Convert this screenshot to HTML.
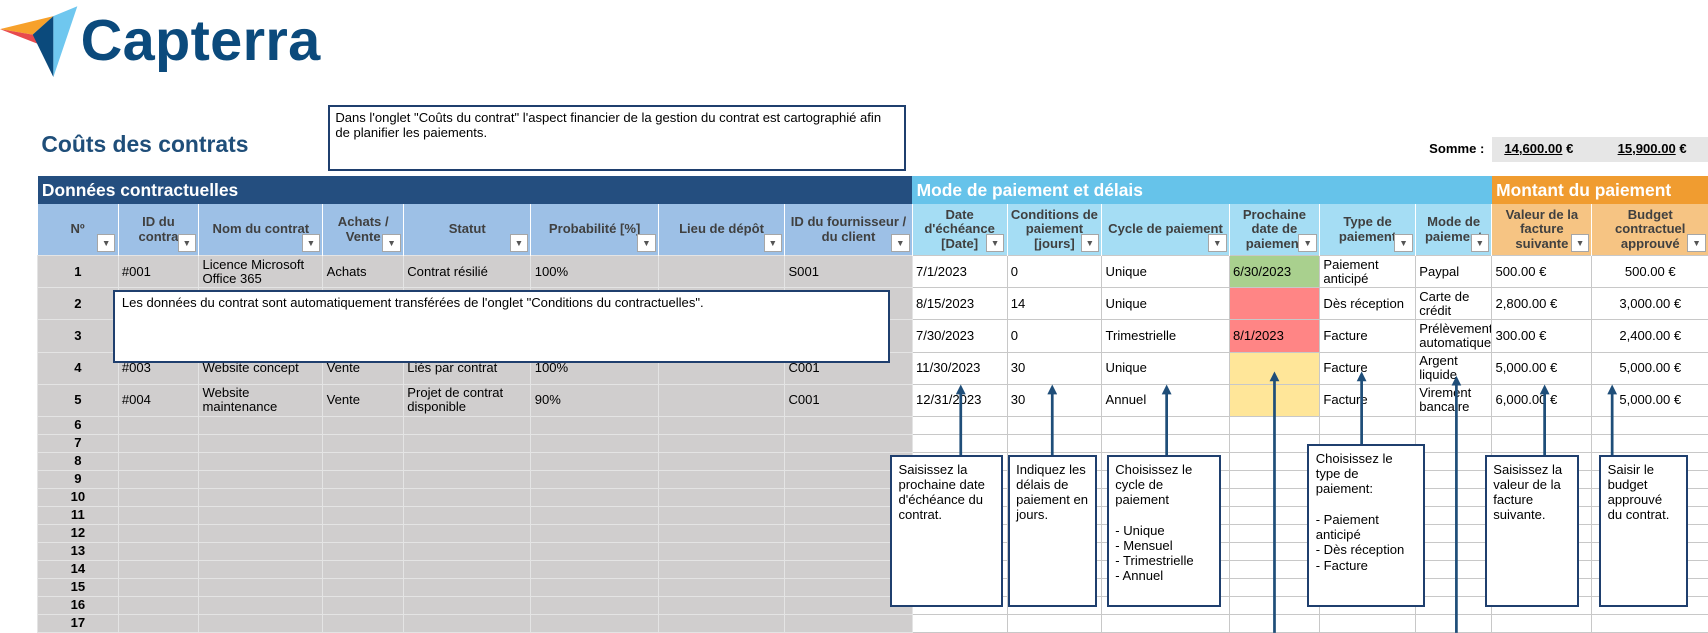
<!DOCTYPE html>
<html><head><meta charset="utf-8"><style>
*{margin:0;padding:0;box-sizing:border-box}
html,body{width:1708px;height:633px;overflow:hidden;background:#fff}
#w{zoom:1.0893;position:relative;width:1568px;height:581px;font-family:"Liberation Sans",Arial,sans-serif;color:#000}
.abs{position:absolute}
table{position:absolute;left:34px;top:162px;border-collapse:collapse;table-layout:fixed;width:1534px}
td,th{font-size:12px;line-height:13px;overflow:hidden;white-space:nowrap;padding:0 3px;vertical-align:middle;text-align:left;font-weight:normal}
.sec td{height:25px;color:#fff;font-weight:bold;font-size:16px;padding-left:4px}
.hd th{height:48px;font-weight:bold;color:#404040;text-align:center;white-space:normal;position:relative;border-right:1px solid #fff;padding:0 2px}
.hd th i{position:absolute;right:2px;bottom:3px;width:17px;height:17px;background:#fff;border:1px solid #a6a6a6;font-style:normal;font-size:8px;line-height:16px;color:#555;text-align:center}
.l{background:#d0cece;border:1px solid #e4e4e4}
.r{background:#fff;border:1px solid #c8c8c8}
.n{font-weight:bold;text-align:center}
tr.d td{height:29.4px;white-space:normal}
tr.e td{height:16.58px}
.box{position:absolute;border:2px solid #1f3f6e;background:#fff;font-size:12px;line-height:14px;padding:4px 6px}
</style></head><body><div id="w">
<svg class="abs" style="left:0;top:3px" width="72" height="68" viewBox="0 0 72 68">
<polygon points="0,24 49,12 30,29" fill="#f7a12b"/>
<polygon points="0,24 30,29 36,38" fill="#e84a4d"/>
<polygon points="30,29 49,12 49,68" fill="#0b4a7c"/>
<polygon points="49,12 71,3 49,68" fill="#6fc7ef"/>
</svg>
<div class="abs" style="left:74px;top:7px;font-size:53px;font-weight:bold;color:#0b4a7c;letter-spacing:0.3px">Capterra</div>
<div class="abs" style="left:38px;top:120px;font-size:21px;font-weight:bold;color:#1f4e79">Coûts des contrats</div>
<div class="box" style="left:301px;top:96px;width:531px;height:61px;padding:3px 5px">Dans l'onglet "Coûts du contrat" l'aspect financier de la gestion du contrat est cartographié afin de planifier les paiements.</div>
<div class="abs" style="left:1370px;top:126px;width:198px;height:23px;background:#e6e6e6"></div>
<div class="abs" style="left:1312px;top:129px;font-size:12px;font-weight:bold">Somme :</div>
<div class="abs" style="left:1381px;top:129px;font-size:12px;font-weight:bold"><u>14,600.00</u> €</div>
<div class="abs" style="left:1485px;top:129px;font-size:12px;font-weight:bold"><u>15,900.00</u> €</div>
<table>
<colgroup><col style="width:74px"><col style="width:74px"><col style="width:114px"><col style="width:74px"><col style="width:117px"><col style="width:117px"><col style="width:116px"><col style="width:117px"><col style="width:87px"><col style="width:87px"><col style="width:117px"><col style="width:83px"><col style="width:88px"><col style="width:70px"><col style="width:92px"><col style="width:107px"></colgroup>
<tr class="sec"><td colspan="8" style="background:#244e7f">Données contractuelles</td><td colspan="6" style="background:#66c3ea">Mode de paiement et délais</td><td colspan="2" style="background:#f09c30">Montant du paiement</td></tr>
<tr class="hd">
<th style="background:#9dc0e6">Nº<i>▼</i></th><th style="background:#9dc0e6">ID du contra<i>▼</i></th><th style="background:#9dc0e6">Nom du contrat<i>▼</i></th><th style="background:#9dc0e6">Achats / Vente<i>▼</i></th><th style="background:#9dc0e6">Statut<i>▼</i></th><th style="background:#9dc0e6">Probabilité [%]<i>▼</i></th><th style="background:#9dc0e6">Lieu de dépôt<i>▼</i></th><th style="background:#9dc0e6">ID du fournisseur / du client<i>▼</i></th>
<th style="background:#a5ddf4">Date d'échéance [Date]<i>▼</i></th><th style="background:#a5ddf4">Conditions de paiement [jours]<i>▼</i></th><th style="background:#a5ddf4">Cycle de paiement<i>▼</i></th><th style="background:#a5ddf4">Prochaine date de paiement<i>▼</i></th><th style="background:#a5ddf4">Type de paiement<i>▼</i></th><th style="background:#a5ddf4">Mode de paiement<i>▼</i></th>
<th style="background:#f6c483">Valeur de la facture suivante<i>▼</i></th><th style="background:#f6c483">Budget contractuel approuvé<i>▼</i></th></tr>
<tr class="d"><td class="l n">1</td><td class="l">#001</td><td class="l">Licence Microsoft Office 365</td><td class="l">Achats</td><td class="l">Contrat résilié</td><td class="l">100%</td><td class="l"></td><td class="l">S001</td><td class="r">7/1/2023</td><td class="r">0</td><td class="r">Unique</td><td class="r" style="background:#a9d08e">6/30/2023</td><td class="r">Paiement anticipé</td><td class="r">Paypal</td><td class="r">500.00 €</td><td class="r" style="text-align:center">500.00 €</td></tr>
<tr class="d"><td class="l n">2</td><td class="l"></td><td class="l"></td><td class="l"></td><td class="l"></td><td class="l"></td><td class="l"></td><td class="l"></td><td class="r">8/15/2023</td><td class="r">14</td><td class="r">Unique</td><td class="r" style="background:#ff8585"></td><td class="r">Dès réception</td><td class="r">Carte de crédit</td><td class="r">2,800.00 €</td><td class="r" style="text-align:center">3,000.00 €</td></tr>
<tr class="d"><td class="l n">3</td><td class="l"></td><td class="l"></td><td class="l"></td><td class="l"></td><td class="l"></td><td class="l"></td><td class="l"></td><td class="r">7/30/2023</td><td class="r">0</td><td class="r">Trimestrielle</td><td class="r" style="background:#ff8585">8/1/2023</td><td class="r">Facture</td><td class="r">Prélèvement automatique</td><td class="r">300.00 €</td><td class="r" style="text-align:center">2,400.00 €</td></tr>
<tr class="d"><td class="l n">4</td><td class="l">#003</td><td class="l">Website concept</td><td class="l">Vente</td><td class="l">Liés par contrat</td><td class="l">100%</td><td class="l"></td><td class="l">C001</td><td class="r">11/30/2023</td><td class="r">30</td><td class="r">Unique</td><td class="r" style="background:#ffe699"></td><td class="r">Facture</td><td class="r">Argent liquide</td><td class="r">5,000.00 €</td><td class="r" style="text-align:center">5,000.00 €</td></tr>
<tr class="d"><td class="l n">5</td><td class="l">#004</td><td class="l">Website maintenance</td><td class="l">Vente</td><td class="l">Projet de contrat disponible</td><td class="l">90%</td><td class="l"></td><td class="l">C001</td><td class="r">12/31/2023</td><td class="r">30</td><td class="r">Annuel</td><td class="r" style="background:#ffe699"></td><td class="r">Facture</td><td class="r">Virement bancaire</td><td class="r">6,000.00 €</td><td class="r" style="text-align:center">5,000.00 €</td></tr>
<tr class="e"><td class="l n">6</td><td class="l"></td><td class="l"></td><td class="l"></td><td class="l"></td><td class="l"></td><td class="l"></td><td class="l"></td><td class="r"></td><td class="r"></td><td class="r"></td><td class="r"></td><td class="r"></td><td class="r"></td><td class="r"></td><td class="r"></td></tr>
<tr class="e"><td class="l n">7</td><td class="l"></td><td class="l"></td><td class="l"></td><td class="l"></td><td class="l"></td><td class="l"></td><td class="l"></td><td class="r"></td><td class="r"></td><td class="r"></td><td class="r"></td><td class="r"></td><td class="r"></td><td class="r"></td><td class="r"></td></tr>
<tr class="e"><td class="l n">8</td><td class="l"></td><td class="l"></td><td class="l"></td><td class="l"></td><td class="l"></td><td class="l"></td><td class="l"></td><td class="r"></td><td class="r"></td><td class="r"></td><td class="r"></td><td class="r"></td><td class="r"></td><td class="r"></td><td class="r"></td></tr>
<tr class="e"><td class="l n">9</td><td class="l"></td><td class="l"></td><td class="l"></td><td class="l"></td><td class="l"></td><td class="l"></td><td class="l"></td><td class="r"></td><td class="r"></td><td class="r"></td><td class="r"></td><td class="r"></td><td class="r"></td><td class="r"></td><td class="r"></td></tr>
<tr class="e"><td class="l n">10</td><td class="l"></td><td class="l"></td><td class="l"></td><td class="l"></td><td class="l"></td><td class="l"></td><td class="l"></td><td class="r"></td><td class="r"></td><td class="r"></td><td class="r"></td><td class="r"></td><td class="r"></td><td class="r"></td><td class="r"></td></tr>
<tr class="e"><td class="l n">11</td><td class="l"></td><td class="l"></td><td class="l"></td><td class="l"></td><td class="l"></td><td class="l"></td><td class="l"></td><td class="r"></td><td class="r"></td><td class="r"></td><td class="r"></td><td class="r"></td><td class="r"></td><td class="r"></td><td class="r"></td></tr>
<tr class="e"><td class="l n">12</td><td class="l"></td><td class="l"></td><td class="l"></td><td class="l"></td><td class="l"></td><td class="l"></td><td class="l"></td><td class="r"></td><td class="r"></td><td class="r"></td><td class="r"></td><td class="r"></td><td class="r"></td><td class="r"></td><td class="r"></td></tr>
<tr class="e"><td class="l n">13</td><td class="l"></td><td class="l"></td><td class="l"></td><td class="l"></td><td class="l"></td><td class="l"></td><td class="l"></td><td class="r"></td><td class="r"></td><td class="r"></td><td class="r"></td><td class="r"></td><td class="r"></td><td class="r"></td><td class="r"></td></tr>
<tr class="e"><td class="l n">14</td><td class="l"></td><td class="l"></td><td class="l"></td><td class="l"></td><td class="l"></td><td class="l"></td><td class="l"></td><td class="r"></td><td class="r"></td><td class="r"></td><td class="r"></td><td class="r"></td><td class="r"></td><td class="r"></td><td class="r"></td></tr>
<tr class="e"><td class="l n">15</td><td class="l"></td><td class="l"></td><td class="l"></td><td class="l"></td><td class="l"></td><td class="l"></td><td class="l"></td><td class="r"></td><td class="r"></td><td class="r"></td><td class="r"></td><td class="r"></td><td class="r"></td><td class="r"></td><td class="r"></td></tr>
<tr class="e"><td class="l n">16</td><td class="l"></td><td class="l"></td><td class="l"></td><td class="l"></td><td class="l"></td><td class="l"></td><td class="l"></td><td class="r"></td><td class="r"></td><td class="r"></td><td class="r"></td><td class="r"></td><td class="r"></td><td class="r"></td><td class="r"></td></tr>
<tr class="e"><td class="l n">17</td><td class="l"></td><td class="l"></td><td class="l"></td><td class="l"></td><td class="l"></td><td class="l"></td><td class="l"></td><td class="r"></td><td class="r"></td><td class="r"></td><td class="r"></td><td class="r"></td><td class="r"></td><td class="r"></td><td class="r"></td></tr>
</table>
<div class="box" style="left:104px;top:266px;width:713px;height:67px;padding:3px 6px">Les données du contrat sont automatiquement transférées de l'onglet "Conditions du contractuelles".</div>
<svg class="abs" style="left:0;top:0" width="1568" height="581">
<defs><marker id="a" markerUnits="userSpaceOnUse" markerWidth="9" markerHeight="9" refX="2" refY="4.5" orient="auto"><path d="M0,0 L9,4.5 L0,9 z" fill="#1f4e79"/></marker></defs>
<g stroke="#1f4e79" stroke-width="2.5" marker-end="url(#a)">
<line x1="882" y1="418" x2="882" y2="360"/>
<line x1="966" y1="418" x2="966" y2="360"/>
<line x1="1071" y1="418" x2="1071" y2="360"/>
<line x1="1250" y1="408" x2="1250" y2="348"/>
<line x1="1418" y1="418" x2="1418" y2="360"/>
<line x1="1480" y1="418" x2="1480" y2="360"/>
<line x1="1170" y1="581" x2="1170" y2="348"/>
<line x1="1337" y1="581" x2="1337" y2="352"/>
</g></svg>
<div class="box" style="left:817px;top:418px;width:104px;height:139px">Saisissez la prochaine date d'échéance du contrat.</div>
<div class="box" style="left:925px;top:418px;width:82px;height:139px">Indiquez les délais de paiement en jours.</div>
<div class="box" style="left:1016px;top:418px;width:105px;height:139px">Choisissez le cycle de paiement<br><br>- Unique<br>- Mensuel<br>- Trimestrielle<br>- Annuel</div>
<div class="box" style="left:1200px;top:408px;width:108px;height:149px">Choisissez le type de paiement:<br><br>- Paiement anticipé<br>- Dès réception<br>- Facture</div>
<div class="box" style="left:1363px;top:418px;width:87px;height:139px">Saisissez la valeur de la facture suivante.</div>
<div class="box" style="left:1468px;top:418px;width:82px;height:139px">Saisir le budget approuvé du contrat.</div>
</div></body></html>
